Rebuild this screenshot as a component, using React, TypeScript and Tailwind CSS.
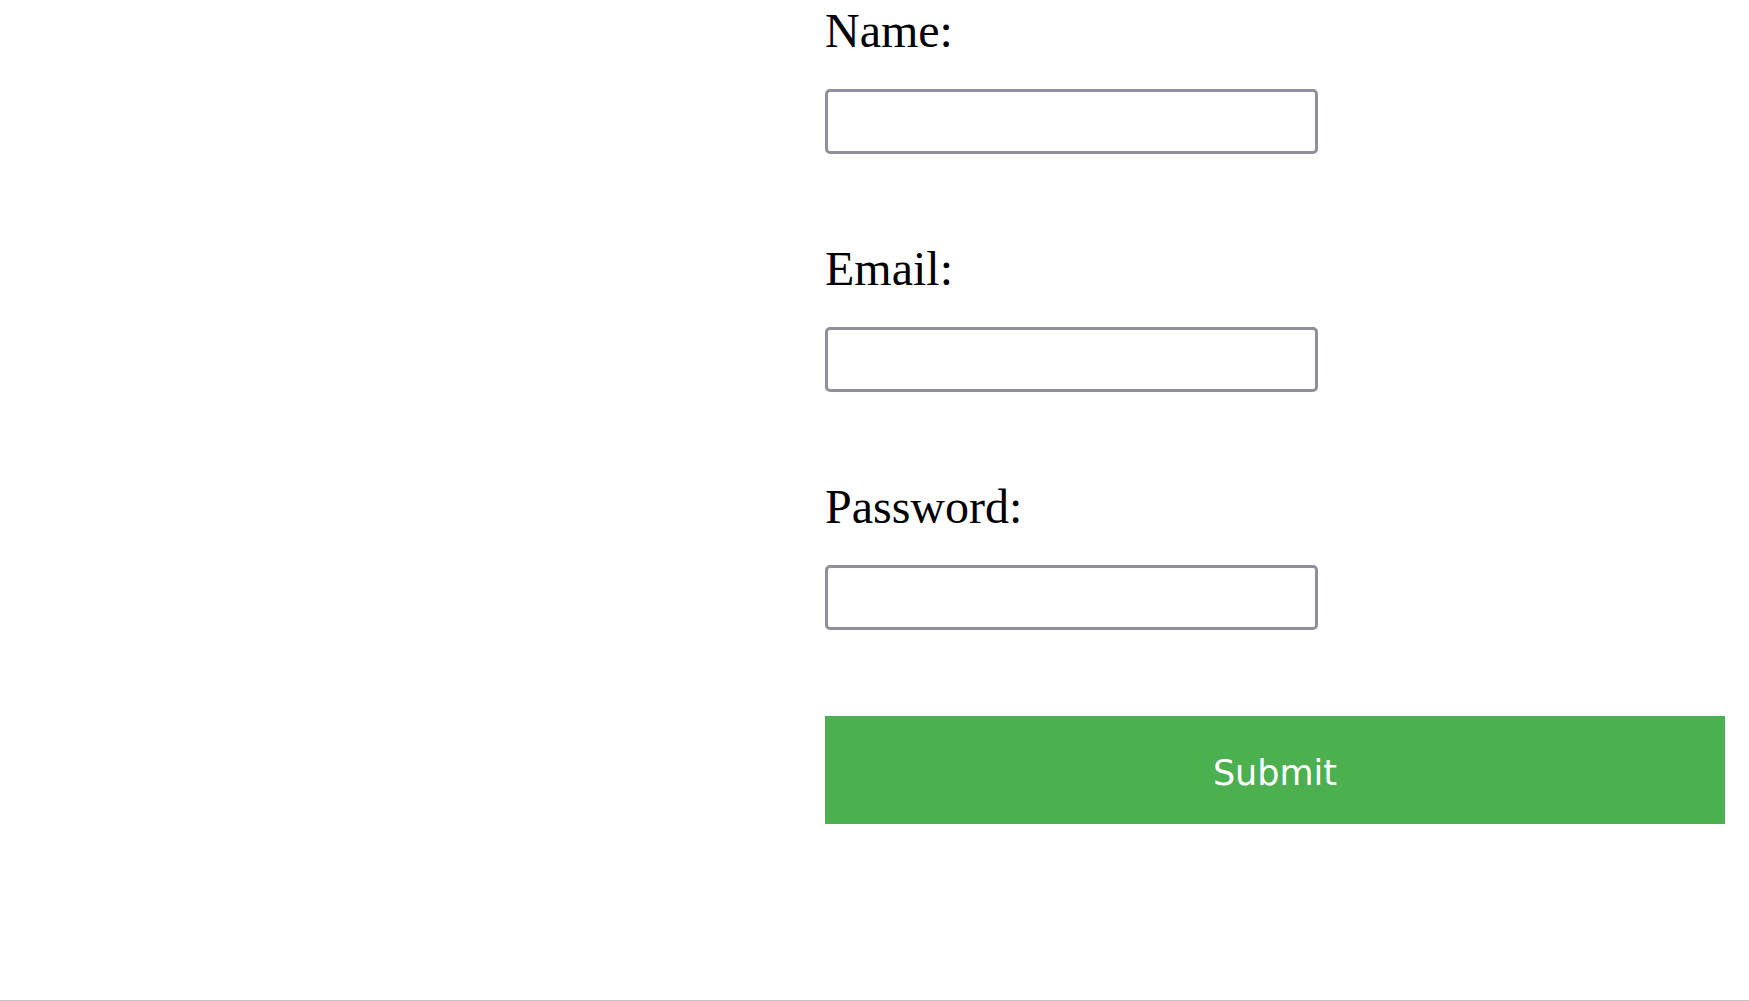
export default function App() {
  const fields = [
    { label: 'Name:', type: 'text' },
    { label: 'Email:', type: 'email' },
    { label: 'Password:', type: 'password' },
  ]

  return (
    <div className="h-[1001px] w-full overflow-hidden border-b border-[#c4c4c4] bg-white">
      <form className="flex flex-col pl-[825px] pr-[24px] pt-[6px]">
        {fields.map((f, i) => (
          <div key={f.label} className={`flex flex-col ${i > 0 ? 'mt-[90px]' : ''}`}>
            <label className="font-['Liberation_Serif',serif] text-[48px] leading-[50px] text-black">
              {f.label}
            </label>
            <input
              type={f.type}
              className="mt-[33px] h-[65px] w-[493px] rounded-[5px] border-[3px] border-[#8f8f9d] bg-white outline-none"
            />
          </div>
        ))}

        <button
          type="submit"
          className="mt-[86px] h-[108px] w-[900px] bg-[#4caf50] pt-[6px] font-['DejaVu_Sans',sans-serif] text-[35px] text-white"
        >
          Submit
        </button>
      </form>
    </div>
  )
}
